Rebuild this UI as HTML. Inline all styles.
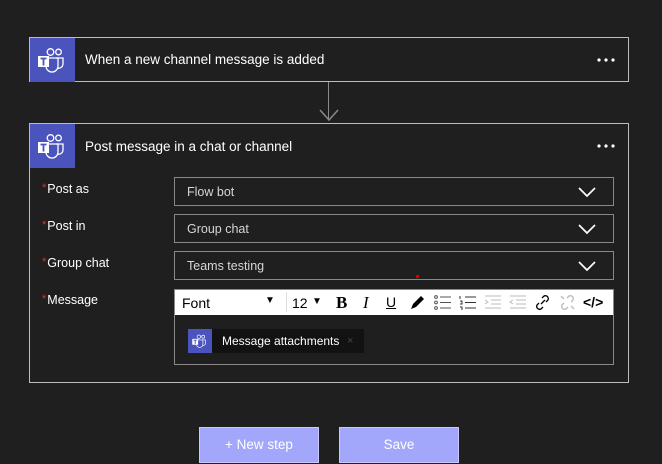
<!DOCTYPE html>
<html><head><meta charset="utf-8"><style>
*{box-sizing:border-box;margin:0;padding:0}
body{width:662px;height:464px;background:#201f1f;font-family:"Liberation Sans",sans-serif;position:relative;overflow:hidden;color:#fff}
.a{position:absolute}
.card{position:absolute;border:1px solid #bdbdbd;background:#201f1f}
.ic{position:absolute;left:0;top:0;width:45px;height:44px;background:#4b53bc}
.title{position:absolute;left:55px;font-size:13.5px;color:#fff}
.dots{position:absolute;right:12px}
.lbl{position:absolute;left:12px;font-size:12.5px;color:#fff}
.lbl b{color:#d13438;font-weight:normal;font-size:11px;vertical-align:top;margin-right:1px}
.inp{position:absolute;left:144px;width:440px;height:29px;border:1px solid #8a8886;font-size:12.5px;color:#d6d6d6;padding:7px 0 0 12px}
.chev{position:absolute;right:17px;top:9px}
.btn{position:absolute;top:427px;width:120px;height:36px;background:#a2a7fc;border:1px solid #c8c8ff;color:#fff;font-size:13.5px;text-align:center;line-height:34px}
.tb{position:absolute;top:0;height:24px;color:#000;font-size:14px}
</style></head><body>
<svg width="0" height="0" style="position:absolute"><defs><symbol id="t" viewBox="0 0 45 44">
<circle cx="28.5" cy="14" r="2.8" fill="none" stroke="#fff" stroke-width="1.3"/>
<circle cx="20.5" cy="14" r="3.3" fill="none" stroke="#fff" stroke-width="1.3"/>
<path d="M16 20h12v8a6 6 0 0 1-12 0z" fill="none" stroke="#fff" stroke-width="1.3"/>
<path d="M26 20h7v6a4.5 4.5 0 0 1-6 4" fill="none" stroke="#fff" stroke-width="1.3"/>
<rect x="8" y="18" width="11" height="11" fill="#fff"/>
<path d="M10.5 20.5h6M13.5 20.5v7" stroke="#4b53bc" stroke-width="1.8"/>
</symbol>
<symbol id="d" viewBox="0 0 20 6"><circle cx="3" cy="3" r="1.6" fill="#fff"/><circle cx="10" cy="3" r="1.6" fill="#fff"/><circle cx="17" cy="3" r="1.6" fill="#fff"/></symbol>
</defs></svg>

<div class="card" style="left:29px;top:37px;width:600px;height:45px">
<div class="ic"><svg width="45" height="44"><use href="#t"/></svg></div>
<div class="title" style="top:14px">When a new channel message is added</div>
<svg class="dots" style="top:19px" width="20" height="6"><use href="#d"/></svg>
</div>

<div class="a" style="left:328px;top:82px;width:1px;height:38px;background:#8a8a8a"></div>
<svg class="a" style="left:318px;top:108px" width="22" height="16"><path d="M2 2l9 10 9-10" fill="none" stroke="#8a8a8a" stroke-width="1.5"/></svg>

<div class="card" style="left:29px;top:123px;width:600px;height:260px">
<div class="ic"><svg width="45" height="44"><use href="#t"/></svg></div>
<div class="title" style="top:15px">Post message in a chat or channel</div>
<svg class="dots" style="top:19px" width="20" height="6"><use href="#d"/></svg>

<div class="lbl" style="top:58px"><b>*</b>Post as</div>
<div class="lbl" style="top:95px"><b>*</b>Post in</div>
<div class="lbl" style="top:132px"><b>*</b>Group chat</div>
<div class="lbl" style="top:169px"><b>*</b>Message</div>

<div class="inp" style="top:53px">Flow bot<svg class="chev" width="18" height="11"><path d="M1 1l8 8 8-8" fill="none" stroke="#fff" stroke-width="1.7"/></svg></div>
<div class="inp" style="top:90px">Group chat<svg class="chev" width="18" height="11"><path d="M1 1l8 8 8-8" fill="none" stroke="#fff" stroke-width="1.7"/></svg></div>
<div class="inp" style="top:127px">Teams testing<svg class="chev" width="18" height="11"><path d="M1 1l8 8 8-8" fill="none" stroke="#fff" stroke-width="1.7"/></svg></div>
<div class="a" style="left:386px;top:151px;width:3px;height:3px;border-radius:2px;background:#e00"></div>

<div class="a" style="left:144px;top:165px;width:440px;height:76px;border:1px solid #8a8886">
 <div class="a" style="left:0;top:0;width:438px;height:25px;background:#fff">
  <div class="tb" style="left:7px;top:5px;font-size:14px">Font</div>
  <div class="tb" style="left:90px;top:5px;font-size:10px">▼</div>
  <div class="a" style="left:111px;top:2px;width:1px;height:20px;background:#ddd"></div>
  <div class="tb" style="left:117px;top:5px">12</div>
  <div class="tb" style="left:137px;top:6px;font-size:10px">▼</div>
  <div class="tb" style="left:161px;top:3px;font-family:'Liberation Serif';font-weight:bold;font-size:17px">B</div>
  <div class="tb" style="left:188px;top:3px;font-family:'Liberation Serif';font-style:italic;font-size:17px">I</div>
  <div class="tb" style="left:211px;top:4px;text-decoration:underline;font-size:14px">U</div>
  <svg class="a" style="left:234px;top:4px" width="16" height="17"><path d="M2 15l2-5 8-8 3 3-8 8z" fill="#000"/></svg>
  <svg class="a" style="left:259px;top:5px" width="18" height="15" stroke="#555" fill="none"><circle cx="2" cy="2" r="1.4"/><circle cx="2" cy="7.5" r="1.4"/><circle cx="2" cy="13" r="1.4"/><path d="M6 2h11M6 7.5h11M6 13h11"/></svg>
  <svg class="a" style="left:284px;top:5px" width="18" height="15" stroke="#333" fill="none"><path d="M6 2h11M6 7.5h11M6 13h11M1 1v3M1 6h2v3H1M1 12h2v3"/></svg>
  <svg class="a" style="left:309px;top:5px" width="18" height="15" stroke="#bbb" fill="none"><path d="M1 1h16M7 5h10M7 9h10M1 13h16M1 5l3 2-3 2"/></svg>
  <svg class="a" style="left:334px;top:5px" width="18" height="15" stroke="#bbb" fill="none"><path d="M1 1h16M7 5h10M7 9h10M1 13h16M4 5L1 7l3 2"/></svg>
  <svg class="a" style="left:359px;top:4px" width="17" height="17" stroke="#000" fill="none" stroke-width="1.3"><path d="M7 10l4-4M8 4l2-2a3 3 0 0 1 4 4l-2 2M9 13l-2 2a3 3 0 0 1-4-4l2-2"/></svg>
  <svg class="a" style="left:384px;top:4px" width="17" height="17" stroke="#bbb" fill="none" stroke-width="1.3"><path d="M8 4l2-2a3 3 0 0 1 4 4l-2 2M9 13l-2 2a3 3 0 0 1-4-4l2-2M2 2l3 3M12 12l3 3"/></svg>
  <div class="tb" style="left:408px;top:4px;font-size:14px;font-weight:bold">&lt;/&gt;</div>
 </div>
 <div class="a" style="left:13px;top:39px;width:176px;height:24px;background:#121212">
  <div class="a" style="left:0;top:0;width:24px;height:24px;background:#4b53bc"><svg width="24" height="24" viewBox="0 0 45 44"><use href="#t"/></svg></div>
  <div class="a" style="left:34px;top:5px;font-size:12px;color:#fff">Message attachments</div>
  <div class="a" style="left:159px;top:6px;font-size:11px;color:#444">×</div>
 </div>
</div>
</div>

<div class="btn" style="left:199px">+ New step</div>
<div class="btn" style="left:339px">Save</div>
</body></html>
